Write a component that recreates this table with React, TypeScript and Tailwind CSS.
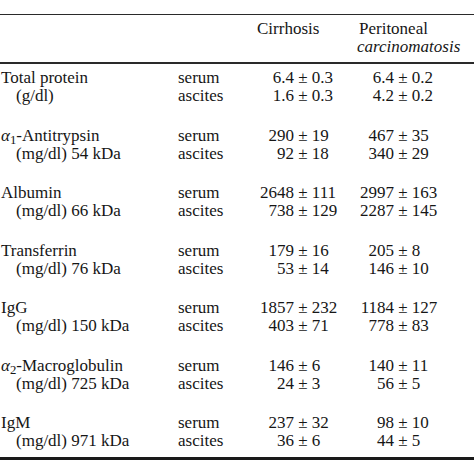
import React from "react";

type V = [string, string, string, string];
type G = { name: React.ReactNode; unit: string; s: V; a: V };

const groups: G[] = [
  { name: "Total protein", unit: "(g/dl)", s: ["6.4", "0.3", "6.4", "0.2"], a: ["1.6", "0.3", "4.2", "0.2"] },
  {
    name: (
      <>
        <i>α</i>
        <sub>1</sub>-Antitrypsin
      </>
    ),
    unit: "(mg/dl) 54 kDa",
    s: ["290", "19", "467", "35"],
    a: ["92", "18", "340", "29"],
  },
  { name: "Albumin", unit: "(mg/dl) 66 kDa", s: ["2648", "111", "2997", "163"], a: ["738", "129", "2287", "145"] },
  { name: "Transferrin", unit: "(mg/dl) 76 kDa", s: ["179", "16", "205", "8"], a: ["53", "14", "146", "10"] },
  { name: "IgG", unit: "(mg/dl) 150 kDa", s: ["1857", "232", "1184", "127"], a: ["403", "71", "778", "83"] },
  {
    name: (
      <>
        <i>α</i>
        <sub>2</sub>-Macroglobulin
      </>
    ),
    unit: "(mg/dl) 725 kDa",
    s: ["146", "6", "140", "11"],
    a: ["24", "3", "56", "5"],
  },
  { name: "IgM", unit: "(mg/dl) 971 kDa", s: ["237", "32", "98", "10"], a: ["36", "6", "44", "5"] },
];

function Line({ label, type, v, indent }: { label: React.ReactNode; type: string; v: V; indent?: boolean }) {
  return (
    <div className="flex h-[18px] leading-[18px] whitespace-pre">
      <div className={indent ? "w-[178px] pl-[16px]" : "w-[178px] pl-[1px]"}>{label}</div>
      <div className="w-[70px]">{type}</div>
      <div className="w-[46px] text-right">{v[0]}</div>
      <div className="w-[54px]">{"\u00a0±\u00a0" + v[1]}</div>
      <div className="w-[46px] text-right">{v[2]}</div>
      <div className="flex-1">{"\u00a0±\u00a0" + v[3]}</div>
    </div>
  );
}

export default function App() {
  return (
    <div className="w-[474px] h-[460px] bg-white text-[#161616] text-[17px] overflow-hidden font-['Liberation_Serif','Times_New_Roman',Tinos,serif]">
      <div className="h-[14px]" />
      <div className="border-t border-[#2a2a2a] pt-[5px] pb-[6px]">
        <div className="flex h-[18px] leading-[18px]">
          <div className="w-[257px]" />
          <div className="w-[102px]">Cirrhosis</div>
          <div>Peritoneal</div>
        </div>
        <div className="flex h-[18px] leading-[18px]">
          <div className="w-[357px]" />
          <div className="italic">carcinomatosis</div>
        </div>
      </div>
      <div className="border-t-[2px] border-[#2a2a2a] pt-[5px] pb-[7px] border-b-[3px] border-b-[#1a1a1a] flex flex-col gap-[21.5px]">
        {groups.map((g, i) => (
          <div key={i}>
            <Line label={g.name} type="serum" v={g.s} />
            <Line label={g.unit} type="ascites" v={g.a} indent />
          </div>
        ))}
      </div>
    </div>
  );
}
